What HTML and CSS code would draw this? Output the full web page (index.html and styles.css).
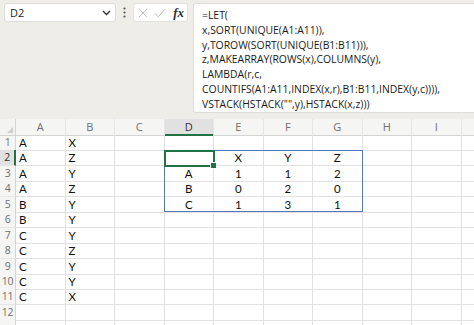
FILE: index.html
```html
<!DOCTYPE html>
<html lang="en">
<head>
  <meta charset="UTF-8">
  <title>LET formula</title>
  <link rel="stylesheet" href="styles.css">
</head>
<body>

  <!-- Formula bar -->
  <div class="formula-area">
    <div class="name-box">
      <span>D2</span>
      <svg class="chevron" width="9" height="6" viewBox="0 0 9 6"><path d="M1 1 L4.5 4.5 L8 1" fill="none" stroke="#333" stroke-width="1.4"/></svg>
    </div>
    <div class="dots">
      <svg width="3" height="11" viewBox="0 0 3 11"><circle cx="1.5" cy="1.5" r="1.1" fill="#555"/><circle cx="1.5" cy="5.5" r="1.1" fill="#555"/><circle cx="1.5" cy="9.5" r="1.1" fill="#555"/></svg>
    </div>
    <div class="fx-box">
      <svg width="12" height="12" viewBox="0 0 12 12"><path d="M1 1 L11 11 M11 1 L1 11" stroke="#b8b8b8" stroke-width="1.1"/></svg>
      <svg width="14" height="12" viewBox="0 0 14 12"><path d="M1 6 L5 10.5 L13 1.5" fill="none" stroke="#b8b8b8" stroke-width="1.1"/></svg>
      <span class="fx">fx</span>
    </div>
    <div class="formula-box">=LET(
x,SORT(UNIQUE(A1:A11)),
y,TOROW(SORT(UNIQUE(B1:B11))),
z,MAKEARRAY(ROWS(x),COLUMNS(y),
LAMBDA(r,c,
COUNTIFS(A1:A11,INDEX(x,r),B1:B11,INDEX(y,c)))),
VSTACK(HSTACK("",y),HSTACK(x,z)))</div>
  </div>

  <!-- Sheet grid -->
  <div class="sheet">
    <div class="row head">
      <div class="corner"><span class="tri"></span></div>
      <div class="col-h">A</div><div class="col-h">B</div><div class="col-h">C</div>
      <div class="col-h active">D</div><div class="col-h">E</div><div class="col-h">F</div>
      <div class="col-h">G</div><div class="col-h">H</div><div class="col-h">I</div><div class="col-h"></div>
    </div>
    <div class="row">
      <div class="row-h">1</div>
      <div class="cell">A</div><div class="cell">X</div><div class="cell"></div>
      <div class="cell"></div><div class="cell"></div><div class="cell"></div><div class="cell"></div>
      <div class="cell"></div><div class="cell"></div><div class="cell"></div>
    </div>
    <div class="row">
      <div class="row-h active">2</div>
      <div class="cell">A</div><div class="cell">Z</div><div class="cell"></div>
      <div class="cell c"></div><div class="cell c">X</div><div class="cell c">Y</div><div class="cell c">Z</div>
      <div class="cell"></div><div class="cell"></div><div class="cell"></div>
    </div>
    <div class="row">
      <div class="row-h">3</div>
      <div class="cell">A</div><div class="cell">Y</div><div class="cell"></div>
      <div class="cell c">A</div><div class="cell c">1</div><div class="cell c">1</div><div class="cell c">2</div>
      <div class="cell"></div><div class="cell"></div><div class="cell"></div>
    </div>
    <div class="row">
      <div class="row-h">4</div>
      <div class="cell">A</div><div class="cell">Z</div><div class="cell"></div>
      <div class="cell c">B</div><div class="cell c">0</div><div class="cell c">2</div><div class="cell c">0</div>
      <div class="cell"></div><div class="cell"></div><div class="cell"></div>
    </div>
    <div class="row">
      <div class="row-h">5</div>
      <div class="cell">B</div><div class="cell">Y</div><div class="cell"></div>
      <div class="cell c">C</div><div class="cell c">1</div><div class="cell c">3</div><div class="cell c">1</div>
      <div class="cell"></div><div class="cell"></div><div class="cell"></div>
    </div>
    <div class="row">
      <div class="row-h">6</div>
      <div class="cell">B</div><div class="cell">Y</div><div class="cell"></div>
      <div class="cell"></div><div class="cell"></div><div class="cell"></div><div class="cell"></div>
      <div class="cell"></div><div class="cell"></div><div class="cell"></div>
    </div>
    <div class="row">
      <div class="row-h">7</div>
      <div class="cell">C</div><div class="cell">Y</div><div class="cell"></div>
      <div class="cell"></div><div class="cell"></div><div class="cell"></div><div class="cell"></div>
      <div class="cell"></div><div class="cell"></div><div class="cell"></div>
    </div>
    <div class="row">
      <div class="row-h">8</div>
      <div class="cell">C</div><div class="cell">Z</div><div class="cell"></div>
      <div class="cell"></div><div class="cell"></div><div class="cell"></div><div class="cell"></div>
      <div class="cell"></div><div class="cell"></div><div class="cell"></div>
    </div>
    <div class="row">
      <div class="row-h">9</div>
      <div class="cell">C</div><div class="cell">Y</div><div class="cell"></div>
      <div class="cell"></div><div class="cell"></div><div class="cell"></div><div class="cell"></div>
      <div class="cell"></div><div class="cell"></div><div class="cell"></div>
    </div>
    <div class="row">
      <div class="row-h">10</div>
      <div class="cell">C</div><div class="cell">Y</div><div class="cell"></div>
      <div class="cell"></div><div class="cell"></div><div class="cell"></div><div class="cell"></div>
      <div class="cell"></div><div class="cell"></div><div class="cell"></div>
    </div>
    <div class="row">
      <div class="row-h">11</div>
      <div class="cell">C</div><div class="cell">X</div><div class="cell"></div>
      <div class="cell"></div><div class="cell"></div><div class="cell"></div><div class="cell"></div>
      <div class="cell"></div><div class="cell"></div><div class="cell"></div>
    </div>
    <div class="row">
      <div class="row-h">12</div>
      <div class="cell"></div><div class="cell"></div><div class="cell"></div>
      <div class="cell"></div><div class="cell"></div><div class="cell"></div><div class="cell"></div>
      <div class="cell"></div><div class="cell"></div><div class="cell"></div>
    </div>
    <div class="row">
      <div class="row-h"></div>
      <div class="cell"></div><div class="cell"></div><div class="cell"></div>
      <div class="cell"></div><div class="cell"></div><div class="cell"></div><div class="cell"></div>
      <div class="cell"></div><div class="cell"></div><div class="cell"></div>
    </div>

    <!-- spill range and active cell -->
    <div class="spill"></div>
    <div class="selected"><span class="handle"></span></div>
  </div>

</body>
</html>
```

FILE: styles.css
```css
body {
  margin: 0;
  width: 474px;
  height: 325px;
  overflow: hidden;
  background: #fff;
  font-family: "Open Sans", "Liberation Sans", sans-serif;
}

/* Formula bar */
.formula-area {
  display: flex;
  align-items: flex-start;
  height: 119px;
  box-sizing: border-box;
  padding: 3px 0 0 4px;
  background: #eeede8;
}

.name-box {
  display: flex;
  align-items: center;
  justify-content: space-between;
  width: 112px;
  height: 19px;
  box-sizing: border-box;
  padding: 0 4px 0 5px;
  background: #fff;
  border: 1px solid #dcdcd8;
  border-radius: 3px;
  font-size: 11px;
  color: #222;
}

.dots {
  display: flex;
  justify-content: center;
  width: 17px;
  padding-top: 4px;
}

.fx-box {
  display: flex;
  align-items: center;
  gap: 6px;
  width: 55px;
  height: 19px;
  box-sizing: border-box;
  padding: 0 3px 0 4px;
  background: #fff;
  border: 1px solid #e2e2de;
  border-radius: 3px;
}

.fx {
  font-family: "Liberation Serif", serif;
  font-style: italic;
  font-weight: bold;
  font-size: 13px;
  color: #333;
  margin-left: 1px;
}

.formula-box {
  flex: 1;
  margin-left: 5px;
  height: 110px;
  box-sizing: border-box;
  padding: 4px 0 0 8px;
  background: #fff;
  border: 1px solid #dcdcd8;
  border-right: none;
  border-radius: 3px 0 0 3px;
  white-space: pre;
  font-size: 10.4px;
  line-height: 14.8px;
  color: #1a1a1a;
}

/* Sheet */
.sheet {
  position: relative;
  font-family: "Lato", "Liberation Sans", sans-serif;
}

.row {
  display: grid;
  grid-template-columns: 16px repeat(10, 49.5px);
  height: 15.45px;
}

.row.head {
  height: 16px;
}

.corner {
  position: relative;
  background: #f3f3f1;
  border-bottom: 1px solid #d4d4d4;
  border-right: 1px solid #d4d4d4;
  box-sizing: border-box;
}

.tri {
  position: absolute;
  right: 2px;
  bottom: 2px;
  width: 0;
  height: 0;
  border-left: 6px solid transparent;
  border-bottom: 6px solid #cfcfcf;
}

.col-h {
  background: #f5f5f4;
  border-bottom: 1px solid #d4d4d4;
  border-right: 1px solid #e6e6e6;
  box-sizing: border-box;
  text-align: center;
  font-size: 11px;
  line-height: 15px;
  color: #707070;
  font-family: "Open Sans", sans-serif;
}

.col-h.active {
  background: #e1e1e1;
  border-bottom: 2px solid #217346;
  color: #333;
}

.row-h {
  background: #f5f5f4;
  border-right: 1px solid #d4d4d4;
  border-bottom: 1px solid #e6e6e6;
  box-sizing: border-box;
  text-align: center;
  font-size: 10.5px;
  line-height: 15px;
  color: #707070;
  font-family: "Open Sans", sans-serif;
  letter-spacing: -0.3px;
}

.row-h.active {
  background: #e1e1e1;
  border-right: 2px solid #217346;
  color: #333;
}

.cell {
  border-right: 1px solid #e1e1e1;
  border-bottom: 1px solid #e1e1e1;
  box-sizing: border-box;
  padding-left: 3px;
  font-size: 11.5px;
  line-height: 15px;
  color: #111;
}

.cell.c {
  text-align: center;
  padding-left: 0;
}

/* Spill range D2:G5 */
.spill {
  position: absolute;
  left: 164px;
  top: 31px;
  width: 199px;
  height: 62px;
  border: 1px solid #5577bb;
  box-sizing: border-box;
}

/* Active cell D2 */
.selected {
  position: absolute;
  left: 164px;
  top: 31px;
  width: 51px;
  height: 17px;
  border: 2px solid #217346;
  box-sizing: border-box;
}

.handle {
  position: absolute;
  right: -4px;
  bottom: -4px;
  width: 5px;
  height: 5px;
  background: #217346;
  border: 1px solid #fff;
}
```
